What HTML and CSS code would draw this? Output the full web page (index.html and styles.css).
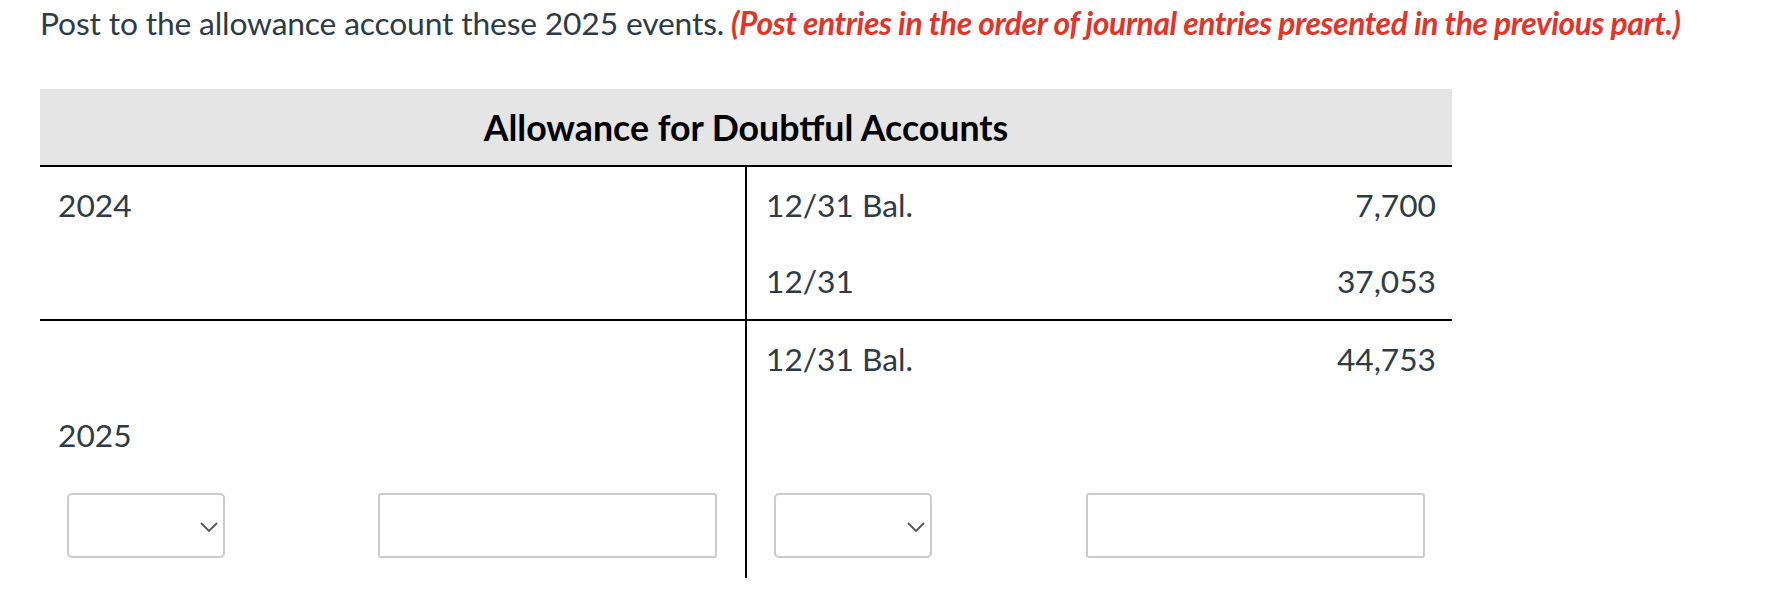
FILE: index.html
```html
<!DOCTYPE html>
<html lang="en">
<head>
<meta charset="utf-8">
<title>Allowance for Doubtful Accounts</title>
<link rel="stylesheet" href="styles.css">
</head>
<body>
<div class="page">
  <p class="prompt">Post to the allowance account these 2025 events. <em class="note">(Post entries in the order of journal entries presented in the previous part.)</em></p>

  <div class="taccount">
    <div class="thead">Allowance for Doubtful Accounts</div>
    <div class="tbody">
      <div class="side debit">
        <div class="row"><span>2024</span><span></span></div>
        <div class="row ruled"><span></span><span></span></div>
        <div class="row"><span></span><span></span></div>
        <div class="row"><span>2025</span><span></span></div>
        <div class="row inputs">
          <div class="select-wrap">
            <select class="sel" aria-label="Debit date"><option></option></select>
            <svg class="chev" width="18" height="10" viewBox="0 0 18 10"><path d="M1 1 L9 9 L17 1" fill="none" stroke="#555" stroke-width="1.8"/></svg>
          </div>
          <input class="amt" type="text" aria-label="Debit amount">
        </div>
      </div>
      <div class="side credit">
        <div class="row"><span>12/31 Bal.</span><span>7,700</span></div>
        <div class="row ruled"><span>12/31</span><span>37,053</span></div>
        <div class="row"><span>12/31 Bal.</span><span>44,753</span></div>
        <div class="row"><span></span><span></span></div>
        <div class="row inputs">
          <div class="select-wrap">
            <select class="sel" aria-label="Credit date"><option></option></select>
            <svg class="chev" width="18" height="10" viewBox="0 0 18 10"><path d="M1 1 L9 9 L17 1" fill="none" stroke="#555" stroke-width="1.8"/></svg>
          </div>
          <input class="amt" type="text" aria-label="Credit amount">
        </div>
      </div>
    </div>
  </div>
</div>
</body>
</html>
```

FILE: styles.css
```css
html, body {
  margin: 0;
  padding: 0;
  background: #fff;
}

.page {
  padding: 5px 0 0 40px;
  font-family: Lato, "Noto Sans", sans-serif;
  color: #2d3b45;
}

.prompt {
  margin: 0;
  font-size: 31.8px;
  line-height: 36px;
  letter-spacing: -0.17px;
  white-space: nowrap;
}

.note {
  margin-left: -1px;
  color: #e3342a;
  font-weight: 700;
  font-style: italic;
  letter-spacing: -0.42px;
}

.taccount {
  width: 1412px;
  margin-top: 48px;
}

.thead {
  height: 76px;
  background: #e5e5e5;
  border-bottom: 2px solid #000;
  display: flex;
  align-items: center;
  justify-content: center;
  font-weight: 700;
  font-size: 35.7px;
  color: #000;
}

.tbody {
  display: grid;
  grid-template-columns: 707px 705px;
}

.debit {
  border-right: 2px solid #000;
}

.row {
  display: flex;
  justify-content: space-between;
  height: 76px;
  line-height: 76px;
  font-size: 31.7px;
  padding: 0 18px;
}

.credit .row {
  padding: 0 16px 0 19px;
}

.row.ruled {
  border-bottom: 2px solid #000;
}

.row.inputs {
  height: 105px;
  align-items: center;
  padding: 0 28px 0 27px;
}

.credit .row.inputs {
  padding: 0 27px;
}

.select-wrap {
  position: relative;
  width: 158px;
  height: 65px;
}

.sel {
  display: block;
  appearance: none;
  -webkit-appearance: none;
  width: 158px;
  height: 65px;
  margin: 0;
  border: 2px solid #cbcbcb;
  border-radius: 5px;
  background: #fff;
  box-sizing: border-box;
}

.chev {
  position: absolute;
  left: 133px;
  top: 29px;
  pointer-events: none;
}

.amt {
  display: block;
  width: 339px;
  height: 65px;
  margin: 0;
  border: 2px solid #cbcbcb;
  border-radius: 3px;
  background: #fff;
  box-sizing: border-box;
}
```
